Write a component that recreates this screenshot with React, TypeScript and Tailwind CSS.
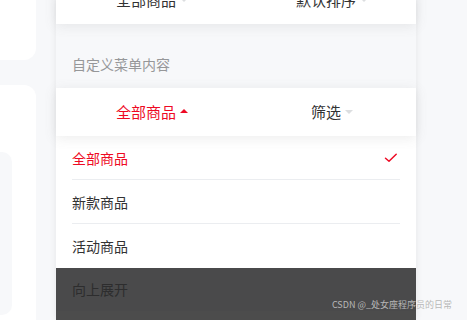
import React from 'react';

const font = { fontFamily: '"Noto Sans CJK SC", "Noto Sans", sans-serif' };

const Caret: React.FC<{ up?: boolean; active?: boolean }> = ({ up, active }) => (
    <span
        className={`absolute right-[-4px] top-1/2 w-0 h-0 border-x-[4px] border-x-transparent ${up ? 'border-b-[4px] -mt-[3px]' : 'border-t-[4px] -mt-[2px]'} ${active ? 'border-b-[#ee0a24]' : 'border-t-[#dcdee0]'}`}
    />
);

const MenuTitle: React.FC<{ label: string; active?: boolean }> = ({ label, active }) => (
    <div className="flex-1 flex items-center justify-center">
        <span className={`relative px-2 text-[15px] leading-[22px] ${active ? 'text-[#ee0a24]' : 'text-[#323233]'}`}>
            {label}
            <Caret up={active} active={active} />
        </span>
    </div>
);

const options = ['全部商品', '新款商品', '活动商品'];

const App: React.FC = () => {
    return (
        <div className="w-[467px] h-[320px] overflow-hidden flex bg-[#f7f8fa] relative" style={font}>
            {/* left preview cards */}
            <div className="w-[36px] shrink-0 flex flex-col">
                <div className="h-[60px] shrink-0 bg-white rounded-br-[12px]" />
                <div className="flex-1 mt-[25px] bg-white rounded-tr-[12px] pt-[67px]">
                    <div className="w-[12px] h-[163px] bg-[#f7f8fa] rounded-r-[10px]" />
                </div>
            </div>

            <div className="w-[20px] shrink-0 bg-[#f7f8fa]" />

            {/* phone preview */}
            <div className="w-[360px] shrink-0 relative flex flex-col bg-[#f7f8fa] shadow-[0_0_6px_rgba(100,101,102,0.12)]">
                <div className="h-12 shrink-0 -mt-6 flex bg-white shadow-[0_2px_12px_rgba(100,101,102,0.12)]">
                    <MenuTitle label="全部商品" />
                    <MenuTitle label="默认排序" />
                </div>

                <div className="h-16 shrink-0 pt-8 px-4 text-[14px] leading-4 text-[#969799]">自定义菜单内容</div>

                <div className="h-12 shrink-0 flex bg-white relative z-10 shadow-[0_2px_12px_rgba(100,101,102,0.12)]">
                    <MenuTitle label="全部商品" active />
                    <MenuTitle label="筛选" />
                </div>

                <div className="shrink-0 bg-white">
                    {options.map((opt, idx) => (
                        <div key={opt} className="h-11 mx-4 flex items-center justify-between border-b border-[#ebedf0] last:border-b-0">
                            <span className={`text-[14px] leading-6 ${idx === 0 ? 'text-[#ee0a24]' : 'text-[#323233]'}`}>{opt}</span>
                            {idx === 0 && (
                                <svg width="16" height="16" viewBox="0 0 16 16" className="mr-[1px]">
                                    <path d="M2.5 8.2 L6 11.2 L13.2 4.2" fill="none" stroke="#ee0a24" strokeWidth="1.5" strokeLinecap="round" strokeLinejoin="round" />
                                </svg>
                            )}
                        </div>
                    ))}
                </div>

                <div className="h-[43px] shrink-0 pt-[13px] px-4 text-[14px] leading-4 text-[#969799]">向上展开</div>
                <div className="h-12 shrink-0 bg-white" />

                {/* overlay */}
                <div className="absolute inset-x-0 top-[268px] bottom-0 bg-black/70" />
            </div>

            <div className="flex-1 bg-[#f7f8fa]" />

            {/* watermark */}
            <div className="absolute right-[15px] top-[299px] text-[9px] leading-[12px] text-[#b8b8b8] whitespace-nowrap">
                CSDN @_处女座程序员的日常
            </div>
        </div>
    );
};

export default App;
